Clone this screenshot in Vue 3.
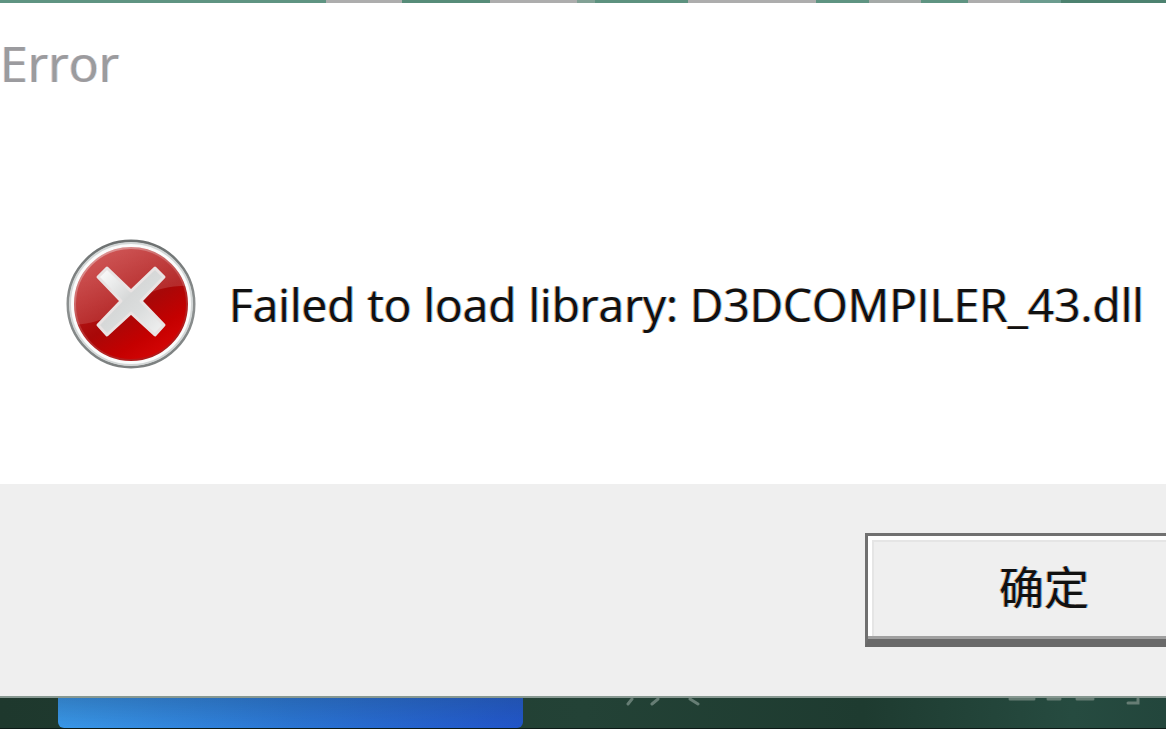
<script setup>
const title = 'Error'
const message = 'Failed to load library: D3DCOMPILER_43.dll'
</script>

<template>
  <main class="desktop">
    <div class="strip"></div>
    <section class="dialog" role="alertdialog" aria-labelledby="title" aria-describedby="message">
      <h1 id="title" class="title">{{ title }}</h1>
      <div class="content">
        <svg class="icon" viewBox="0 0 132 132" aria-hidden="true">
          <defs>
            <linearGradient id="rim" x1="0" y1="0" x2="0" y2="1">
              <stop offset="0" stop-color="#6c7070" />
              <stop offset="0.5" stop-color="#8c9090" />
              <stop offset="1" stop-color="#7c8080" />
            </linearGradient>
            <linearGradient id="red" x1="0.2" y1="0.1" x2="0.75" y2="0.95">
              <stop offset="0" stop-color="#c02525" />
              <stop offset="0.55" stop-color="#a80808" />
              <stop offset="0.8" stop-color="#c40000" />
              <stop offset="1" stop-color="#d40505" />
            </linearGradient>
            <linearGradient id="shine" x1="0.2" y1="0" x2="0.7" y2="1">
              <stop offset="0" stop-color="#ffffff" stop-opacity="0.24" />
              <stop offset="1" stop-color="#ffffff" stop-opacity="0.1" />
            </linearGradient>
            <linearGradient id="edge" x1="0" y1="0" x2="0.6" y2="1">
              <stop offset="0" stop-color="#e09090" />
              <stop offset="0.5" stop-color="#b83333" />
              <stop offset="1" stop-color="#b01818" />
            </linearGradient>
            <linearGradient id="cross" x1="0" y1="0" x2="1" y2="1">
              <stop offset="0" stop-color="#ffffff" />
              <stop offset="0.45" stop-color="#d6d8d8" />
              <stop offset="0.65" stop-color="#dcdede" />
              <stop offset="1" stop-color="#f2f2f2" />
            </linearGradient>
            <clipPath id="disc"><circle cx="66" cy="66" r="57" /></clipPath>
          </defs>
          <circle cx="66" cy="66" r="63" fill="#fbfbfb" stroke="url(#rim)" stroke-width="3" />
          <circle cx="66" cy="66" r="61" fill="none" stroke="#d3d7d7" stroke-width="2" />
          <circle cx="66" cy="66" r="56" fill="url(#red)" stroke="url(#edge)" stroke-width="2" />
          <path clip-path="url(#disc)" d="M0 0H132V48C105 47 92 51 76 59C53 72 43 84 10 87H0Z" fill="url(#shine)" />
          <path d="M42 30L66 53L90 30L99 39L76 63L99 87L90 97L66 75L42 97L33 87L56 63L33 39Z" fill="url(#cross)" stroke="#e9e3e3" stroke-width="3" stroke-linejoin="round" />
        </svg>
        <p id="message" class="message">{{ message }}</p>
      </div>
      <footer class="actions">
        <button type="button" class="ok">确定</button>
      </footer>
    </section>
    <div class="backdrop">
      <div class="tile"></div>
      <svg class="remnants" viewBox="0 0 583 29" preserveAspectRatio="xMinYMin slice" aria-hidden="true">
        <g fill="none" stroke="#667d74" stroke-width="3" stroke-linecap="round">
          <path d="M49 1L45 6M75 1L69 6M107 1L115 6M427 1H451M465 1H477M494 1H510M555 1V5H545" />
        </g>
      </svg>
    </div>
  </main>
</template>

<style>
body {
  margin: 0;
  overflow: hidden;
}
</style>

<style scoped>
.desktop {
  display: flex;
  flex-direction: column;
  height: 100vh;
  overflow: hidden;
  background: #213f35;
  color: #111111;
  font-family: "Open Sans", "Noto Sans CJK SC", sans-serif;
}

.strip {
  flex: none;
  height: 3px;
  background: linear-gradient(to right,
    #5f9482 0 28%, #adadad 28% 34.5%, #578c79 34.5% 42%,
    #adadad 42% 49.5%, #82a195 49.5% 51%, #5d927f 51% 59%,
    #adadad 59% 70%, #5f9482 70% 74.5%, #a5aaa8 74.5% 79%,
    #5f9482 79% 83%, #adadad 83% 87.5%, #6c9c8f 87.5% 91%, #4d8270 91%);
}

.dialog {
  flex: 1;
  display: flex;
  flex-direction: column;
  background: #ffffff;
}

.title {
  margin: 0;
  padding-top: 24px;
  color: #9b9b9f;
  font-size: 50px;
  font-weight: 400;
  line-height: 72px;
  text-shadow: -1px 0 #e5c7b5, 1px 0 #c5e0f8;
}

.content {
  flex: 1;
  display: flex;
  align-items: center;
  gap: 32px;
  padding: 24px 0 0 65px;
}

.icon {
  flex: none;
  width: 132px;
  height: 132px;
}

.message {
  margin: 0;
  font-size: 46px;
  line-height: 60px;
  white-space: nowrap;
  text-shadow: -1px 0 #e0a878, 1px 0 #8cc8f0;
}

.actions {
  display: flex;
  justify-content: flex-end;
  padding: 49px 0;
  background: #efefef;
  overflow: hidden;
}

.ok {
  flex: none;
  width: 358px;
  height: 114px;
  margin-right: -57px;
  padding: 0 0 4px;
  border: 3px solid #707070;
  border-bottom: 8px solid #696969;
  border-radius: 0;
  background: #efefef;
  box-shadow: inset 0 -3px #a0a0a0, inset 4px 4px #ffffff, inset 6px 6px #e5e5e5;
  color: #111111;
  font-family: "Noto Sans CJK SC", sans-serif;
  font-size: 45px;
  line-height: 60px;
  text-shadow: -1px 0 #e0a878, 1px 0 #6cacdf;
}

.backdrop {
  flex: none;
  display: flex;
  height: 30px;
  padding-left: 58px;
  border-top: 2px solid #879891;
  border-bottom: 1px solid #0c1b17;
  background: linear-gradient(to right, #1e382d, #234236 50%, #1e3b30 74%, #264b40 92%, #23463c);
}

.tile {
  width: 42%;
  border-radius: 0 0 6px 6px;
  background: linear-gradient(to bottom, rgba(35, 80, 130, 0.35), transparent), linear-gradient(to right, #3997e7, #2a75d3 50%, #2154c9);
}

.remnants {
  flex: 1;
  min-width: 0;
  height: 29px;
  margin-left: 60px;
}
</style>
